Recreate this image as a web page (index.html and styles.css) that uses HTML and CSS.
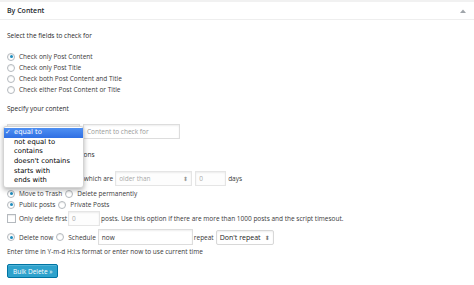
FILE: index.html
```html
<!DOCTYPE html>
<html lang="en">
<head>
  <meta charset="UTF-8">
  <meta name="viewport" content="width=device-width, initial-scale=1.0">
  <title>Bulk Delete - By Content</title>
  <link rel="stylesheet" href="styles.css">
</head>
<body>

  <div class="postbox">
    <!-- box header -->
    <div class="hndle">
      <span>By Content</span>
      <svg class="toggle" width="6" height="4" viewBox="0 0 6 4"><path d="M0 4 L3 0.5 L6 4 Z" fill="#a0a5aa"/></svg>
    </div>

    <div class="inside">
      <h4 class="title t-fields">Select the fields to check for</h4>
      <div class="radios">
        <label class="row line"><span class="radio on"></span>Check only Post Content</label>
        <label class="row line"><span class="radio"></span>Check only Post Title</label>
        <label class="row line"><span class="radio"></span>Check both Post Content and Title</label>
        <label class="row line"><span class="radio"></span>Check either Post Content or Title</label>
      </div>

      <h4 class="title t-specify">Specify your content</h4>
      <div class="row content-row">
        <div class="select match"><span>equal to</span></div>
        <div class="input content placeholder">Content to check for</div>

        <!-- open native dropdown -->
        <ul class="popup">
          <li class="picked"><span class="check">✓</span>equal to</li>
          <li><span class="check"></span>not equal to</li>
          <li><span class="check"></span>contains</li>
          <li><span class="check"></span>doesn't contains</li>
          <li><span class="check"></span>starts with</li>
          <li><span class="check"></span>ends with</li>
        </ul>
      </div>

      <h4 class="title t-filter">Choose your filtering options</h4>
      <div class="row restrict-row">
        <span class="checkbox"></span>
        <span class="lbl l-restrict">Only restrict to posts which are</span>
        <div class="select older disabled"><span>older than</span><span class="arrows">⬍</span></div>
        <div class="input days disabled">0</div>
        <span class="lbl">days</span>
      </div>

      <div class="row line trash-row">
        <span class="radio on"></span><span class="lbl l-gap">Move to Trash</span>
        <span class="radio"></span><span class="lbl">Delete permanently</span>
      </div>
      <div class="row line">
        <span class="radio on"></span><span class="lbl l-gap">Public posts</span>
        <span class="radio"></span><span class="lbl">Private Posts</span>
      </div>

      <div class="row first-row">
        <span class="checkbox"></span>
        <span class="lbl l-first">Only delete first</span>
        <div class="input limit disabled">0</div>
        <span class="lbl">posts. Use this option if there are more than 1000 posts and the script timesout.</span>
      </div>

      <div class="row cron-row">
        <span class="radio on"></span><span class="lbl l-gap">Delete now</span>
        <span class="radio"></span><span class="lbl l-sched">Schedule</span>
        <div class="input when">now</div>
        <span class="lbl l-repeat">repeat</span>
        <div class="select repeat"><span>Don't repeat</span><span class="arrows">⬍</span></div>
      </div>

      <p class="hint">Enter time in Y-m-d H:i:s format or enter now to use current time</p>

      <button class="button-primary">Bulk Delete &raquo;</button>
    </div>
  </div>

</body>
</html>
```

FILE: styles.css
```css
body {
  margin: 0;
  padding: 0;
  background: #fff;
  font-family: "Open Sans", sans-serif;
  font-size: 6.5px;
  color: #3a3a3a;
}
.postbox {
  border-top: 2px solid #f1f1f1;
}
.hndle {
  height: 17px;
  border-bottom: 1px solid #eeeeee;
  padding: 0 7px;
  display: flex;
  align-items: center;
  justify-content: space-between;
  font-size: 7px;
  font-weight: 600;
  color: #23282d;
}
.toggle { margin-right: 1px; }
.inside {
  padding: 0 7px;
}
.title {
  margin: 0;
  height: 10px;
  line-height: 10px;
  font-weight: normal;
  color: #2a2a2a;
}
.t-fields { margin-top: 11px; }
.t-specify { margin-top: 9px; }
.t-filter { margin-top: 12px; }
.radios { margin-top: 10px; }

.row {
  display: flex;
  align-items: center;
  white-space: nowrap;
}
.line { height: 11px; }
.radio {
  box-sizing: border-box;
  width: 8px;
  height: 8px;
  margin-right: 4px;
  border: 1px solid #b4b9be;
  border-radius: 50%;
  background: #fff;
  box-shadow: inset 0 1px 1px rgba(0, 0, 0, 0.08);
  display: flex;
  align-items: center;
  justify-content: center;
  flex: none;
}
.radio.on::after {
  content: "";
  width: 3px;
  height: 3px;
  border-radius: 50%;
  background: #1e8cbe;
}
.checkbox {
  box-sizing: border-box;
  width: 9px;
  height: 9px;
  margin-right: 3px;
  border: 1px solid #b4b9be;
  background: #fff;
  box-shadow: inset 0 1px 1px rgba(0, 0, 0, 0.08);
  flex: none;
}
.l-gap { margin-right: 3px; }
.l-sched { margin-right: 2px; }
.l-first { margin-right: 1px; }
.l-restrict { margin-right: 2px; }
.l-repeat { margin: 0 2px 0 1px; }

.input, .select {
  box-sizing: border-box;
  border: 1px solid #dddddd;
  background: #fff;
  box-shadow: inset 0 1px 2px rgba(0, 0, 0, 0.07);
  display: flex;
  align-items: center;
  padding: 0 3px;
  color: #333;
  flex: none;
}
.disabled {
  color: #aaa;
  border-color: #e5e5e5;
  background: #fdfdfd;
}
.placeholder { color: #999; }
.select { justify-content: space-between; }
.arrows { font-size: 6px; color: #777; font-family: "DejaVu Sans", sans-serif; }
.disabled .arrows { color: #999; }

.content-row {
  position: relative;
  height: 14px;
  margin-top: 10px;
}
.match { width: 73px; height: 14px; margin-right: 3px; }
.content { width: 97px; height: 15px; }

.popup {
  position: absolute;
  left: -4px;
  top: 2px;
  width: 79px;
  margin: 0;
  padding: 1px 0;
  list-style: none;
  background: #fff;
  border: 1px solid #d4d4d4;
  border-radius: 3px;
  box-shadow: 0 2px 5px rgba(0, 0, 0, 0.3);
  font-family: "DejaVu Sans", sans-serif;
  font-size: 6.8px;
  color: #000;
}
.popup li {
  height: 9.7px;
  line-height: 9.7px;
  padding-left: 1px;
}
.popup li.picked {
  background: linear-gradient(#4f90f2, #2f6fe3);
  color: #fff;
}
.check {
  display: inline-block;
  width: 9px;
}

.restrict-row { height: 15px; margin-top: 11px; }
.older { width: 77px; height: 15px; margin-right: 3px; }
.days { width: 31px; height: 15px; margin-right: 2px; }
.trash-row { margin-top: 2px; }
.first-row { height: 15px; margin-top: 1px; }
.limit { width: 32px; height: 15px; margin-right: 1px; }
.cron-row { height: 16px; margin-top: 3px; }
.when { width: 95px; height: 16px; }
.repeat {
  width: 58px;
  height: 15px;
  border-radius: 2px;
  border-color: #d8d8d8;
  color: #222;
  font-size: 7px;
}
.hint {
  margin: 2px 0 0;
  height: 10px;
  line-height: 10px;
}
.button-primary {
  margin-top: 7px;
  height: 14px;
  padding: 0 5px;
  border: 1px solid #0074a2;
  border-radius: 2px;
  background: #2ea2cc;
  box-shadow: inset 0 1px 0 rgba(120, 200, 230, 0.5);
  color: #fff;
  font-family: "Open Sans", sans-serif;
  font-size: 6.5px;
  cursor: pointer;
}
```
